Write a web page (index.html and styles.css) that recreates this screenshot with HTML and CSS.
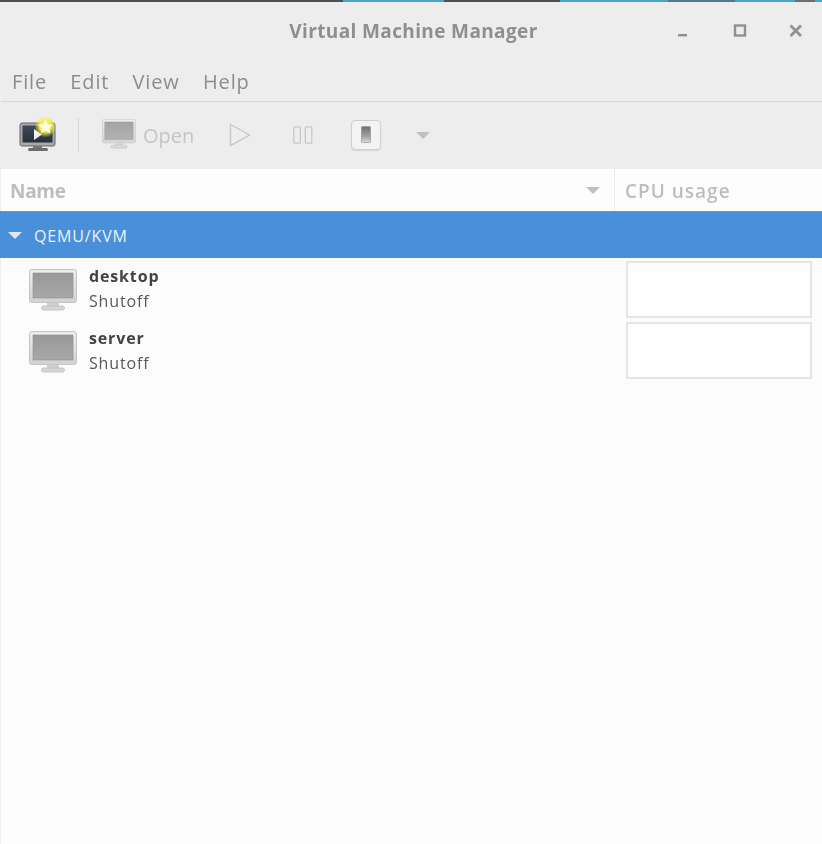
FILE: index.html
```html
<!DOCTYPE html>
<html lang="en">
<head>
<meta charset="utf-8">
<title>Virtual Machine Manager</title>
<link rel="stylesheet" href="styles.css">
</head>
<body>
<svg class="defs" width="0" height="0" aria-hidden="true">
  <defs>
    <linearGradient id="bezel" x1="0" y1="0" x2="0" y2="1"><stop offset="0" stop-color="#eeeeee"/><stop offset="1" stop-color="#d2d2d2"/></linearGradient>
    <linearGradient id="screen" x1="0" y1="0" x2="0" y2="1"><stop offset="0" stop-color="#989898"/><stop offset="1" stop-color="#a8a8a8"/></linearGradient>
    <symbol id="vm" viewBox="0 0 48 42">
      <rect x="0.5" y="0.5" width="47" height="33" rx="2.5" fill="url(#bezel)" stroke="#c4c4c4"/>
      <rect x="4" y="4" width="40" height="25" fill="url(#screen)" stroke="#8e8e8e" stroke-width="0.6"/>
      <rect x="18" y="34" width="12" height="3" fill="#cfcfcf"/>
      <rect x="12.5" y="37" width="23" height="4" rx="2" fill="#d6d6d6" stroke="#bdbdbd" stroke-width="0.8"/>
    </symbol>
  </defs>
</svg>
<div class="desktop-strip">
  <span class="strip-dark"></span><span class="strip-blue"></span><span class="strip-dark2"></span><span class="strip-blue2"></span><span class="strip-mid"></span><span class="strip-blue3"></span><span class="strip-grey"></span><span class="strip-end"></span>
</div>
<div class="window">
  <header class="titlebar">
    <span class="title">Virtual Machine Manager</span>
    <div class="win-controls">
      <svg class="win-icon" width="16" height="16" viewBox="0 0 16 16"><rect x="3" y="11" width="9" height="2.4" fill="#8f9191"/></svg>
      <svg class="win-icon" width="16" height="16" viewBox="0 0 16 16"><rect x="3" y="2.5" width="10" height="10" fill="none" stroke="#8f9191" stroke-width="2.4"/></svg>
      <svg class="win-icon" width="16" height="16" viewBox="0 0 16 16"><path d="M2.5 2.5 13 13M13 2.5 2.5 13" fill="none" stroke="#8f9191" stroke-width="2.8"/></svg>
    </div>
  </header>
  <nav class="menubar">
    <span class="menu-item">File</span>
    <span class="menu-item">Edit</span>
    <span class="menu-item">View</span>
    <span class="menu-item">Help</span>
  </nav>
  <div class="toolbar">
    <svg class="tool-new" width="38" height="36" viewBox="0 0 38 36">
      <defs>
        <linearGradient id="dark" x1="0" y1="0" x2="0" y2="1"><stop offset="0" stop-color="#3d4a5e"/><stop offset="1" stop-color="#27303c"/></linearGradient>
        <radialGradient id="glow"><stop offset="0.5" stop-color="#f6ef3a"/><stop offset="1" stop-color="#f6ef3a" stop-opacity="0"/></radialGradient>
      </defs>
      <rect x="1" y="6" width="35" height="23" rx="2" fill="#a9a9a9" stroke="#666"/>
      <rect x="3.5" y="8.5" width="30" height="17" fill="url(#dark)"/>
      <path d="M15 12 23 17.500 15 23Z" fill="#f2f2f2"/>
      <rect x="14" y="29" width="9" height="2.500" fill="#777"/>
      <rect x="9" y="31" width="20" height="3" rx="1.500" fill="#6c6c6c"/>
      <circle cx="26.500" cy="9.500" r="11" fill="url(#glow)"/>
      <path d="M26.500 2 28.800 7.200 34 7.800 30.200 11.300 31.300 16.500 26.500 13.800 21.700 16.500 22.800 11.300 19 7.800 24.200 7.200Z" fill="#fbfbe6"/>
    </svg>
    <span class="separator"></span>
    <svg class="tool-open-icon" width="34" height="30" viewBox="0 0 48 42"><use href="#vm"/></svg>
    <span class="tool-label">Open</span>
    <svg class="tool-play" width="22" height="24" viewBox="0 0 22 24"><path d="M1.500 1.500 20.500 12 1.500 22.500Z" fill="#eeeeee" stroke="#c6c8c8" stroke-width="1.400"/></svg>
    <svg class="tool-pause" width="20" height="18" viewBox="0 0 20 18"><rect x="0.800" y="0.800" width="6.500" height="16.400" rx="1" fill="#eeeeee" stroke="#c6c8c8" stroke-width="1.300"/><rect x="12.300" y="0.800" width="6.500" height="16.400" rx="1" fill="#eeeeee" stroke="#c6c8c8" stroke-width="1.300"/></svg>
    <span class="tool-stop">
      <svg width="12" height="20" viewBox="0 0 12 20"><defs><linearGradient id="sw" x1="0" y1="0" x2="0" y2="1"><stop offset="0" stop-color="#6e6e6e"/><stop offset="0.65" stop-color="#a5a5a5"/><stop offset="1" stop-color="#dedede"/></linearGradient></defs><rect x="1.500" y="1.500" width="9" height="16" rx="1" fill="url(#sw)" stroke="#9a9a9a" stroke-width="0.800"/></svg>
    </span>
    <span class="tool-arrow"></span>
  </div>
  <div class="vm-list">
    <div class="list-header">
      <div class="col-name"><span>Name</span><span class="sort-arrow"></span></div>
      <div class="col-cpu">CPU usage</div>
    </div>
    <div class="group-row"><span class="group-arrow"></span><span>QEMU/KVM</span></div>
    <div class="vm-row">
      <svg class="vm-icon" width="48" height="42" viewBox="0 0 48 42"><use href="#vm"/></svg>
      <div class="vm-text"><span class="vm-name">desktop</span><span class="vm-state">Shutoff</span></div>
      <div class="cpu-graph cpu-graph-first"></div>
    </div>
    <div class="vm-row">
      <svg class="vm-icon" width="48" height="42" viewBox="0 0 48 42"><use href="#vm"/></svg>
      <div class="vm-text"><span class="vm-name">server</span><span class="vm-state">Shutoff</span></div>
      <div class="cpu-graph"></div>
    </div>
  </div>
</div>
</body>
</html>
```
FILE: styles.css
```css
* { box-sizing: border-box; }
html, body { margin: 0; padding: 0; height: 100%; overflow: hidden; }
body {
  width: 822px;
  height: 844px;
  display: flex;
  flex-direction: column;
  background: #fcfcfc;
  font-family: "Open Sans", "Noto Sans", sans-serif;
}
.defs { position: absolute; }
.desktop-strip { display: flex; height: 2px; flex: none; }
.desktop-strip span { display: block; height: 100%; }
.strip-dark { width: 343px; background: #4a5058; }
.strip-blue { width: 101px; background: #4aa3cf; }
.strip-dark2 { width: 116px; background: #4a5058; }
.strip-blue2 { width: 108px; background: #4aa3cf; }
.strip-mid { width: 67px; background: #4f7a90; }
.strip-blue3 { width: 60px; background: #4aa3cf; }
.strip-grey { width: 20px; background: #6a6e72; }
.strip-end { flex: 1; background: #4aa3cf; }
.window {
  flex: 1;
  display: flex;
  flex-direction: column;
  min-height: 0;
  border-left: 1px solid #efefef;
}
.titlebar {
  height: 58px;
  flex: none;
  background: #ededed;
  display: flex;
  align-items: center;
  justify-content: center;
  position: relative;
}
.title {
  font-size: 19px;
  font-weight: 700;
  color: #8e9090;
  letter-spacing: 0.37px;
  margin-left: 4px;
  filter: blur(0.4px);
}
.win-controls {
  position: absolute;
  right: 18px;
  top: 21px;
  display: flex;
  gap: 40.500px;
}
.menubar {
  height: 42px;
  flex: none;
  background: #ededed;
  border-bottom: 1px solid #d8d8d8;
  display: flex;
  align-items: center;
  gap: 23.300px;
  padding: 2px 0 0 11px;
  font-size: 20px;
  color: #8b8d8d;
  letter-spacing: 0.85px;
}
.menu-item { filter: blur(0.4px); }
.toolbar {
  height: 67px;
  flex: none;
  background: #ededed;
  display: flex;
  align-items: center;
  padding-left: 18px;
}
.tool-new { flex: none; margin-top: -2px; }
.separator { width: 1px; height: 34px; background: #d4d4d4; margin-left: 21px; margin-top: -2px; }
.tool-open-icon { margin-left: 23px; margin-top: -3px; opacity: 0.85; }
.tool-label { margin-left: 7px; font-size: 20px; color: #c4c6c6; margin-top: -1px; filter: blur(0.4px); }
.tool-play { margin-left: 35px; margin-top: -1px; }
.tool-pause { margin-left: 42px; margin-top: -1px; }
.tool-stop {
  width: 30px;
  height: 30px;
  margin-left: 38px;
  margin-top: -2px;
  border: 1px solid #cfcfcf;
  border-radius: 4px;
  background: #f3f3f3;
  box-shadow: 0 1px 1px #d8d8d8;
  display: flex;
  align-items: center;
  justify-content: center;
}
.tool-arrow {
  width: 0;
  height: 0;
  margin-left: 35px;
  border-left: 7px solid transparent;
  border-right: 7px solid transparent;
  border-top: 7px solid #bfc1c1;
  margin-top: -1px;
}
.vm-list { flex: 1; min-height: 0; background: #fcfcfc; }
.list-header {
  height: 42px;
  display: flex;
  background: #fdfdfd;
  color: #bcbebe;
  font-size: 19px;
}
.col-name {
  width: 614px;
  flex: none;
  border-right: 1px solid #eaeaea;
  display: flex;
  align-items: center;
  justify-content: space-between;
  padding: 2px 14px 0 9px;
  font-weight: 700;
  letter-spacing: -0.3px;
  filter: blur(0.4px);
}
.sort-arrow {
  width: 0;
  height: 0;
  margin-top: -2px;
  border-left: 7px solid transparent;
  border-right: 7px solid transparent;
  border-top: 7px solid #bfc1c1;
}
.col-cpu {
  display: flex;
  align-items: center;
  padding: 2px 0 0 10px;
  font-weight: 600;
  letter-spacing: 1px;
  filter: blur(0.4px);
}
.group-row {
  height: 47px;
  margin-left: -1px;
  background: #4a8fd9;
  color: #eaf2fb;
  display: flex;
  align-items: center;
  font-size: 16px;
  letter-spacing: 0.85px;
  padding: 2px 0 0 8px;
  gap: 12px;
  border-top: 1px solid #5d9bdd;
}
.group-arrow {
  width: 0;
  height: 0;
  margin-top: -2px;
  border-left: 7px solid transparent;
  border-right: 7px solid transparent;
  border-top: 7px solid #dbe8f7;
}
.vm-row {
  height: 62px;
  display: flex;
  padding-left: 28px;
  padding-right: 10px;
}
.vm-icon { flex: none; margin-top: 11px; }
.vm-text {
  display: flex;
  flex-direction: column;
  margin-left: 12px;
  margin-top: 6px;
  font-size: 16px;
  line-height: 25px;
  letter-spacing: 0.85px;
}
.vm-name { font-weight: 700; color: #404244; filter: blur(0.3px); }
.vm-state { color: #55585a; filter: blur(0.3px); }
.cpu-graph {
  margin-left: auto;
  margin-top: 2px;
  width: 186px;
  height: 57px;
  background: #ffffff;
  border: 2px solid #e6e4e4;
}
.cpu-graph-first { margin-top: 3px; }
```
